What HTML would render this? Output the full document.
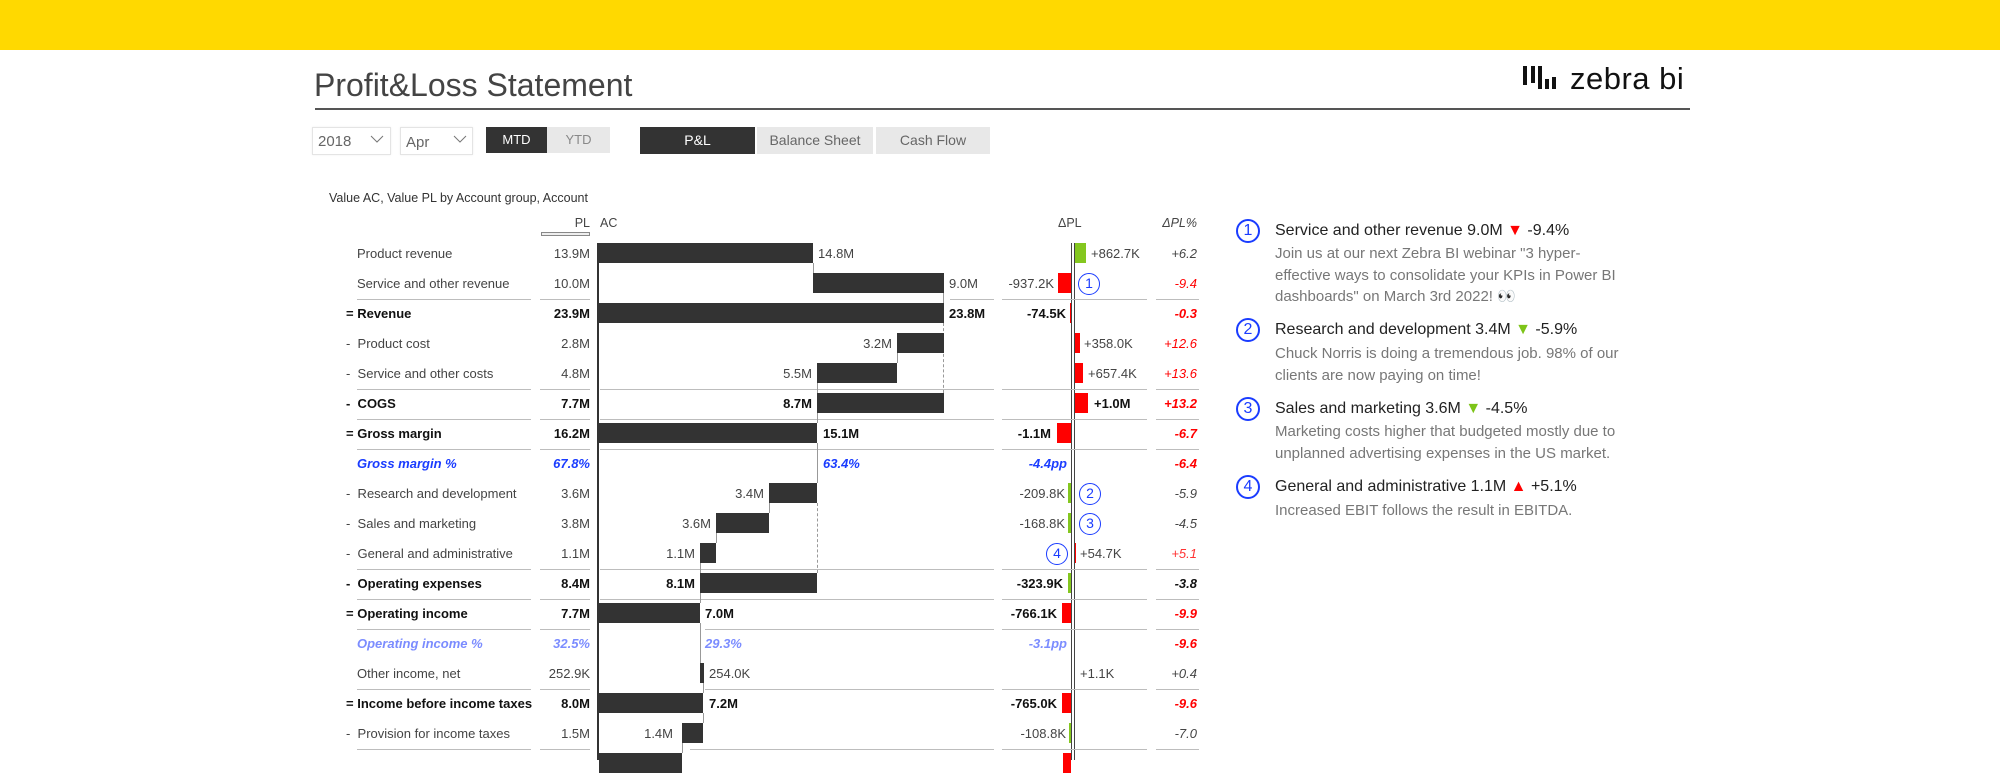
<!DOCTYPE html>
<html><head><meta charset="utf-8"><style>
*{margin:0;padding:0;box-sizing:border-box}
body{width:2000px;height:760px;overflow:hidden;background:#fff;position:relative;font-family:"Liberation Sans",sans-serif}
.a{position:absolute}
.t{position:absolute;font-size:13px;line-height:20px;white-space:nowrap;color:#444}
.b{font-weight:bold;color:#111}
.bar{position:absolute;background:#333;height:20px}
.g{position:absolute;background:#84c71f;height:20px}
.rd{position:absolute;background:#f00;height:20px}
.sep{position:absolute;height:1px;background:#bdbdbd}
.vc{position:absolute;width:1px;background:#999}
.vd{position:absolute;width:0;border-left:1px dashed #999}
.pct{font-style:italic}
.red{color:#f00}
.blue{color:#1a3cff;font-weight:bold;font-style:italic}
.lblue{color:#7b8cff;font-weight:bold;font-style:italic}
.c{position:absolute;width:22px;height:22px;border:1.5px solid #1a3cff;border-radius:50%;color:#1a3cff;font-size:14px;line-height:19px;text-align:center}
.C{position:absolute;width:24px;height:24px;border:2px solid #1a3cff;border-radius:50%;color:#1a3cff;font-size:16px;line-height:20px;text-align:center}
.h{position:absolute;left:1275px;font-size:16px;color:#222;white-space:nowrap;line-height:20px}
.p{position:absolute;left:1275px;font-size:15px;color:#777;line-height:21.5px;white-space:nowrap}
.btn{position:absolute;top:127px;height:27px;font-size:14px;text-align:center;line-height:27px}
</style></head><body>
<div class="a" style="left:0;top:0;width:2000px;height:50px;background:#ffd900"></div>
<div class="a" style="left:314px;top:67px;font-size:32px;color:#444;white-space:nowrap;line-height:36px">Profit&amp;Loss Statement</div>
<div class="a" style="left:315px;top:108px;width:1375px;height:2px;background:#555"></div>
<svg class="a" style="left:1520px;top:64px" width="40" height="28"><rect x="3" y="2" width="4" height="19" fill="#111"/><rect x="11" y="2" width="4" height="17" fill="#111"/><rect x="18" y="2" width="4" height="23" fill="#111"/><rect x="25" y="15" width="4" height="10" fill="#111"/><rect x="32" y="13" width="4" height="12" fill="#111"/></svg>
<div class="a" style="left:1570px;top:62px;font-size:31px;color:#111;letter-spacing:0.5px;line-height:34px;white-space:nowrap">zebra bi</div>

<div class="a" style="left:312px;top:127px;width:79px;height:28px;border:1px solid #e4e4e4;box-shadow:0 0 2px #eee"></div>
<div class="t" style="left:318px;top:132px;font-size:15px;color:#666">2018</div>
<svg class="a" style="left:370px;top:134px" width="14" height="10"><path d="M1 2 L7 8 L13 2" stroke="#777" fill="none"/></svg>
<div class="a" style="left:400px;top:127px;width:73px;height:28px;border:1px solid #e4e4e4;box-shadow:0 0 2px #eee"></div>
<div class="t" style="left:406px;top:133px;font-size:15px;color:#666">Apr</div>
<svg class="a" style="left:453px;top:134px" width="14" height="10"><path d="M1 2 L7 8 L13 2" stroke="#777" fill="none"/></svg>
<div class="btn" style="left:486px;width:61px;background:#333;color:#fff;font-size:13px;height:26px;line-height:26px">MTD</div>
<div class="btn" style="left:547px;width:63px;background:#e8e8e8;color:#888;font-size:13px;height:26px;line-height:26px">YTD</div>
<div class="btn" style="left:640px;width:115px;background:#333;color:#fff">P&amp;L</div>
<div class="btn" style="left:757px;width:116px;background:#e8e8e8;color:#666">Balance Sheet</div>
<div class="btn" style="left:876px;width:114px;background:#e8e8e8;color:#666">Cash Flow</div>

<div class="t" style="left:329px;top:188px;font-size:12.5px;color:#333">Value AC, Value PL by Account group, Account</div>
<div class="t" style="right:1410px;top:213px;font-size:12.5px">PL</div>
<div class="t" style="left:600px;top:213px;font-size:12.5px">AC</div>
<div class="a" style="left:541px;top:232px;width:49px;height:4px;border:1px solid #888;background:#eee"></div>
<div class="t" style="left:1058px;top:213px;font-size:12.5px">ΔPL</div>
<div class="t pct" style="right:803px;top:213px;font-size:12.5px">ΔPL%</div>

<div class="a" style="left:597px;top:243px;width:2px;height:517px;background:#333"></div>
<div class="a" style="left:1071px;top:243px;width:1px;height:517px;background:#444"></div>
<div class="a" style="left:1074px;top:243px;width:1px;height:517px;background:#444"></div>

<div class="sep" style="left:357px;top:299px;width:174px"></div><div class="sep" style="left:540px;top:299px;width:50px"></div><div class="sep" style="left:950px;top:299px;width:44px"></div><div class="sep" style="left:1002px;top:299px;width:145px"></div><div class="sep" style="left:1156px;top:299px;width:43px"></div>
<div class="sep" style="left:357px;top:389px;width:174px"></div><div class="sep" style="left:540px;top:389px;width:50px"></div><div class="sep" style="left:600px;top:389px;width:394px"></div><div class="sep" style="left:1002px;top:389px;width:145px"></div><div class="sep" style="left:1156px;top:389px;width:43px"></div>
<div class="sep" style="left:357px;top:419px;width:174px"></div><div class="sep" style="left:540px;top:419px;width:50px"></div><div class="sep" style="left:600px;top:419px;width:394px"></div><div class="sep" style="left:1002px;top:419px;width:145px"></div><div class="sep" style="left:1156px;top:419px;width:43px"></div>
<div class="sep" style="left:357px;top:449px;width:174px"></div><div class="sep" style="left:540px;top:449px;width:50px"></div><div class="sep" style="left:600px;top:449px;width:394px"></div><div class="sep" style="left:1002px;top:449px;width:145px"></div><div class="sep" style="left:1156px;top:449px;width:43px"></div>
<div class="sep" style="left:357px;top:569px;width:174px"></div><div class="sep" style="left:540px;top:569px;width:50px"></div><div class="sep" style="left:600px;top:569px;width:394px"></div><div class="sep" style="left:1002px;top:569px;width:145px"></div><div class="sep" style="left:1156px;top:569px;width:43px"></div>
<div class="sep" style="left:357px;top:599px;width:174px"></div><div class="sep" style="left:540px;top:599px;width:50px"></div><div class="sep" style="left:600px;top:599px;width:394px"></div><div class="sep" style="left:1002px;top:599px;width:145px"></div><div class="sep" style="left:1156px;top:599px;width:43px"></div>
<div class="sep" style="left:357px;top:629px;width:174px"></div><div class="sep" style="left:540px;top:629px;width:50px"></div><div class="sep" style="left:705px;top:629px;width:289px"></div><div class="sep" style="left:1002px;top:629px;width:145px"></div><div class="sep" style="left:1156px;top:629px;width:43px"></div>
<div class="sep" style="left:357px;top:689px;width:174px"></div><div class="sep" style="left:540px;top:689px;width:50px"></div><div class="sep" style="left:705px;top:689px;width:289px"></div><div class="sep" style="left:1002px;top:689px;width:145px"></div><div class="sep" style="left:1156px;top:689px;width:43px"></div>
<div class="sep" style="left:357px;top:749px;width:174px"></div><div class="sep" style="left:540px;top:749px;width:50px"></div><div class="sep" style="left:690px;top:749px;width:304px"></div><div class="sep" style="left:1002px;top:749px;width:145px"></div><div class="sep" style="left:1156px;top:749px;width:43px"></div>

<div class="vc" style="left:813px;top:263px;height:10px"></div>
<div class="vc" style="left:943px;top:293px;height:10px"></div>
<div class="vd" style="left:943px;top:323px;height:70px"></div>
<div class="vc" style="left:897px;top:353px;height:10px"></div>
<div class="vc" style="left:817px;top:383px;height:10px"></div>
<div class="vc" style="left:817px;top:413px;height:10px"></div>
<div class="vc" style="left:817px;top:443px;height:40px"></div>
<div class="vd" style="left:817px;top:503px;height:70px"></div>
<div class="vc" style="left:769px;top:503px;height:10px"></div>
<div class="vc" style="left:716px;top:533px;height:10px"></div>
<div class="vc" style="left:700px;top:563px;height:10px"></div>
<div class="vc" style="left:700px;top:593px;height:10px"></div>
<div class="vc" style="left:700px;top:623px;height:40px"></div>
<div class="vc" style="left:703px;top:683px;height:10px"></div>
<div class="vc" style="left:703px;top:713px;height:10px"></div>
<div class="vc" style="left:682px;top:743px;height:10px"></div>

<div class="t" style="left:357px;top:244px">Product revenue</div>
<div class="t" style="right:1410px;top:244px">13.9M</div>
<div class="bar" style="left:599px;top:243px;width:214px"></div>
<div class="t" style="left:818px;top:244px">14.8M</div>
<div class="g" style="left:1075px;top:243px;width:11px"></div>
<div class="t" style="left:1091px;top:244px">+862.7K</div>
<div class="t pct" style="right:803px;top:244px">+6.2</div>

<div class="t" style="left:357px;top:274px">Service and other revenue</div>
<div class="t" style="right:1410px;top:274px">10.0M</div>
<div class="bar" style="left:813px;top:273px;width:131px"></div>
<div class="t" style="left:949px;top:274px">9.0M</div>
<div class="rd" style="left:1058px;top:273px;width:13px"></div>
<div class="t" style="right:946px;top:274px">-937.2K</div>
<div class="c" style="left:1078px;top:273px">1</div>
<div class="t pct red" style="right:803px;top:274px">-9.4</div>

<div class="t b" style="left:346px;top:304px">= Revenue</div>
<div class="t b" style="right:1410px;top:304px">23.9M</div>
<div class="bar" style="left:599px;top:303px;width:345px"></div>
<div class="t b" style="left:949px;top:304px">23.8M</div>
<div class="rd" style="left:1070px;top:303px;width:1px"></div>
<div class="t b" style="right:934px;top:304px">-74.5K</div>
<div class="t pct red b" style="right:803px;top:304px;color:#f00">-0.3</div>

<div class="t" style="left:346px;top:334px">-&nbsp; Product cost</div>
<div class="t" style="right:1410px;top:334px">2.8M</div>
<div class="bar" style="left:897px;top:333px;width:47px"></div>
<div class="t" style="right:1108px;top:334px">3.2M</div>
<div class="rd" style="left:1075px;top:333px;width:5px"></div>
<div class="t" style="left:1084px;top:334px">+358.0K</div>
<div class="t pct red" style="right:803px;top:334px">+12.6</div>

<div class="t" style="left:346px;top:364px">-&nbsp; Service and other costs</div>
<div class="t" style="right:1410px;top:364px">4.8M</div>
<div class="bar" style="left:817px;top:363px;width:80px"></div>
<div class="t" style="right:1188px;top:364px">5.5M</div>
<div class="rd" style="left:1075px;top:363px;width:8px"></div>
<div class="t" style="left:1088px;top:364px">+657.4K</div>
<div class="t pct red" style="right:803px;top:364px">+13.6</div>

<div class="t b" style="left:346px;top:394px">-&nbsp; COGS</div>
<div class="t b" style="right:1410px;top:394px">7.7M</div>
<div class="bar" style="left:817px;top:393px;width:127px"></div>
<div class="t b" style="right:1188px;top:394px">8.7M</div>
<div class="rd" style="left:1075px;top:393px;width:13px"></div>
<div class="t b" style="left:1094px;top:394px">+1.0M</div>
<div class="t pct b" style="right:803px;top:394px;color:#f00">+13.2</div>

<div class="t b" style="left:346px;top:424px">= Gross margin</div>
<div class="t b" style="right:1410px;top:424px">16.2M</div>
<div class="bar" style="left:599px;top:423px;width:218px"></div>
<div class="t b" style="left:823px;top:424px">15.1M</div>
<div class="rd" style="left:1057px;top:423px;width:14px"></div>
<div class="t b" style="right:949px;top:424px">-1.1M</div>
<div class="t pct b" style="right:803px;top:424px;color:#f00">-6.7</div>

<div class="t blue" style="left:357px;top:454px">Gross margin %</div>
<div class="t blue" style="right:1410px;top:454px">67.8%</div>
<div class="t blue" style="left:823px;top:454px">63.4%</div>
<div class="t blue" style="right:933px;top:454px">-4.4pp</div>
<div class="t pct b" style="right:803px;top:454px;color:#f00">-6.4</div>

<div class="t" style="left:346px;top:484px">-&nbsp; Research and development</div>
<div class="t" style="right:1410px;top:484px">3.6M</div>
<div class="bar" style="left:769px;top:483px;width:48px"></div>
<div class="t" style="right:1236px;top:484px">3.4M</div>
<div class="g" style="left:1068px;top:483px;width:3px"></div>
<div class="t" style="right:935px;top:484px">-209.8K</div>
<div class="c" style="left:1079px;top:483px">2</div>
<div class="t pct" style="right:803px;top:484px">-5.9</div>

<div class="t" style="left:346px;top:514px">-&nbsp; Sales and marketing</div>
<div class="t" style="right:1410px;top:514px">3.8M</div>
<div class="bar" style="left:716px;top:513px;width:53px"></div>
<div class="t" style="right:1289px;top:514px">3.6M</div>
<div class="g" style="left:1068px;top:513px;width:3px"></div>
<div class="t" style="right:935px;top:514px">-168.8K</div>
<div class="c" style="left:1079px;top:513px">3</div>
<div class="t pct" style="right:803px;top:514px">-4.5</div>

<div class="t" style="left:346px;top:544px">-&nbsp; General and administrative</div>
<div class="t" style="right:1410px;top:544px">1.1M</div>
<div class="bar" style="left:700px;top:543px;width:16px"></div>
<div class="t" style="right:1305px;top:544px">1.1M</div>
<div class="rd" style="left:1075px;top:543px;width:1px"></div>
<div class="c" style="left:1046px;top:543px">4</div>
<div class="t" style="left:1080px;top:544px">+54.7K</div>
<div class="t pct" style="right:803px;top:544px;color:#f33">+5.1</div>

<div class="t b" style="left:346px;top:574px">-&nbsp; Operating expenses</div>
<div class="t b" style="right:1410px;top:574px">8.4M</div>
<div class="bar" style="left:700px;top:573px;width:117px"></div>
<div class="t b" style="right:1305px;top:574px">8.1M</div>
<div class="g" style="left:1068px;top:573px;width:3px"></div>
<div class="t b" style="right:937px;top:574px">-323.9K</div>
<div class="t pct b" style="right:803px;top:574px">-3.8</div>

<div class="t b" style="left:346px;top:604px">= Operating income</div>
<div class="t b" style="right:1410px;top:604px">7.7M</div>
<div class="bar" style="left:599px;top:603px;width:101px"></div>
<div class="t b" style="left:705px;top:604px">7.0M</div>
<div class="rd" style="left:1062px;top:603px;width:9px"></div>
<div class="t b" style="right:943px;top:604px">-766.1K</div>
<div class="t pct b" style="right:803px;top:604px;color:#f00">-9.9</div>

<div class="t lblue" style="left:357px;top:634px">Operating income %</div>
<div class="t lblue" style="right:1410px;top:634px">32.5%</div>
<div class="t lblue" style="left:705px;top:634px">29.3%</div>
<div class="t lblue" style="right:933px;top:634px">-3.1pp</div>
<div class="t pct b" style="right:803px;top:634px;color:#f00">-9.6</div>

<div class="t" style="left:357px;top:664px">Other income, net</div>
<div class="t" style="right:1410px;top:664px">252.9K</div>
<div class="bar" style="left:700px;top:663px;width:4px"></div>
<div class="t" style="left:709px;top:664px">254.0K</div>
<div class="t" style="left:1080px;top:664px">+1.1K</div>
<div class="t pct" style="right:803px;top:664px">+0.4</div>

<div class="t b" style="left:346px;top:694px">= Income before income taxes</div>
<div class="t b" style="right:1410px;top:694px">8.0M</div>
<div class="bar" style="left:599px;top:693px;width:104px"></div>
<div class="t b" style="left:709px;top:694px">7.2M</div>
<div class="rd" style="left:1062px;top:693px;width:9px"></div>
<div class="t b" style="right:943px;top:694px">-765.0K</div>
<div class="t pct b" style="right:803px;top:694px;color:#f00">-9.6</div>

<div class="t" style="left:346px;top:724px">-&nbsp; Provision for income taxes</div>
<div class="t" style="right:1410px;top:724px">1.5M</div>
<div class="bar" style="left:682px;top:723px;width:21px"></div>
<div class="t" style="right:1327px;top:724px">1.4M</div>
<div class="g" style="left:1069px;top:723px;width:2px"></div>
<div class="t" style="right:934px;top:724px">-108.8K</div>
<div class="t pct" style="right:803px;top:724px">-7.0</div>

<div class="bar" style="left:599px;top:753px;width:83px"></div>
<div class="rd" style="left:1063px;top:753px;width:8px"></div>

<div class="C" style="left:1236px;top:219px">1</div>
<div class="h" style="top:221px">Service and other revenue 9.0M <span style="color:#f00">▼</span> -9.4%</div>
<div class="p" style="top:243px">Join us at our next Zebra BI webinar "3 hyper-<br>effective ways to consolidate your KPIs in Power BI<br>dashboards" on March 3rd 2022! 👀</div>
<div class="C" style="left:1236px;top:318px">2</div>
<div class="h" style="top:320px">Research and development 3.4M <span style="color:#7dc418">▼</span> -5.9%</div>
<div class="p" style="top:343px">Chuck Norris is doing a tremendous job. 98% of our<br>clients are now paying on time!</div>
<div class="C" style="left:1236px;top:397px">3</div>
<div class="h" style="top:399px">Sales and marketing 3.6M <span style="color:#7dc418">▼</span> -4.5%</div>
<div class="p" style="top:421px">Marketing costs higher that budgeted mostly due to<br>unplanned advertising expenses in the US market.</div>
<div class="C" style="left:1236px;top:475px">4</div>
<div class="h" style="top:477px">General and administrative 1.1M <span style="color:#f00">▲</span> +5.1%</div>
<div class="p" style="top:500px">Increased EBIT follows the result in EBITDA.</div>
</body></html>
